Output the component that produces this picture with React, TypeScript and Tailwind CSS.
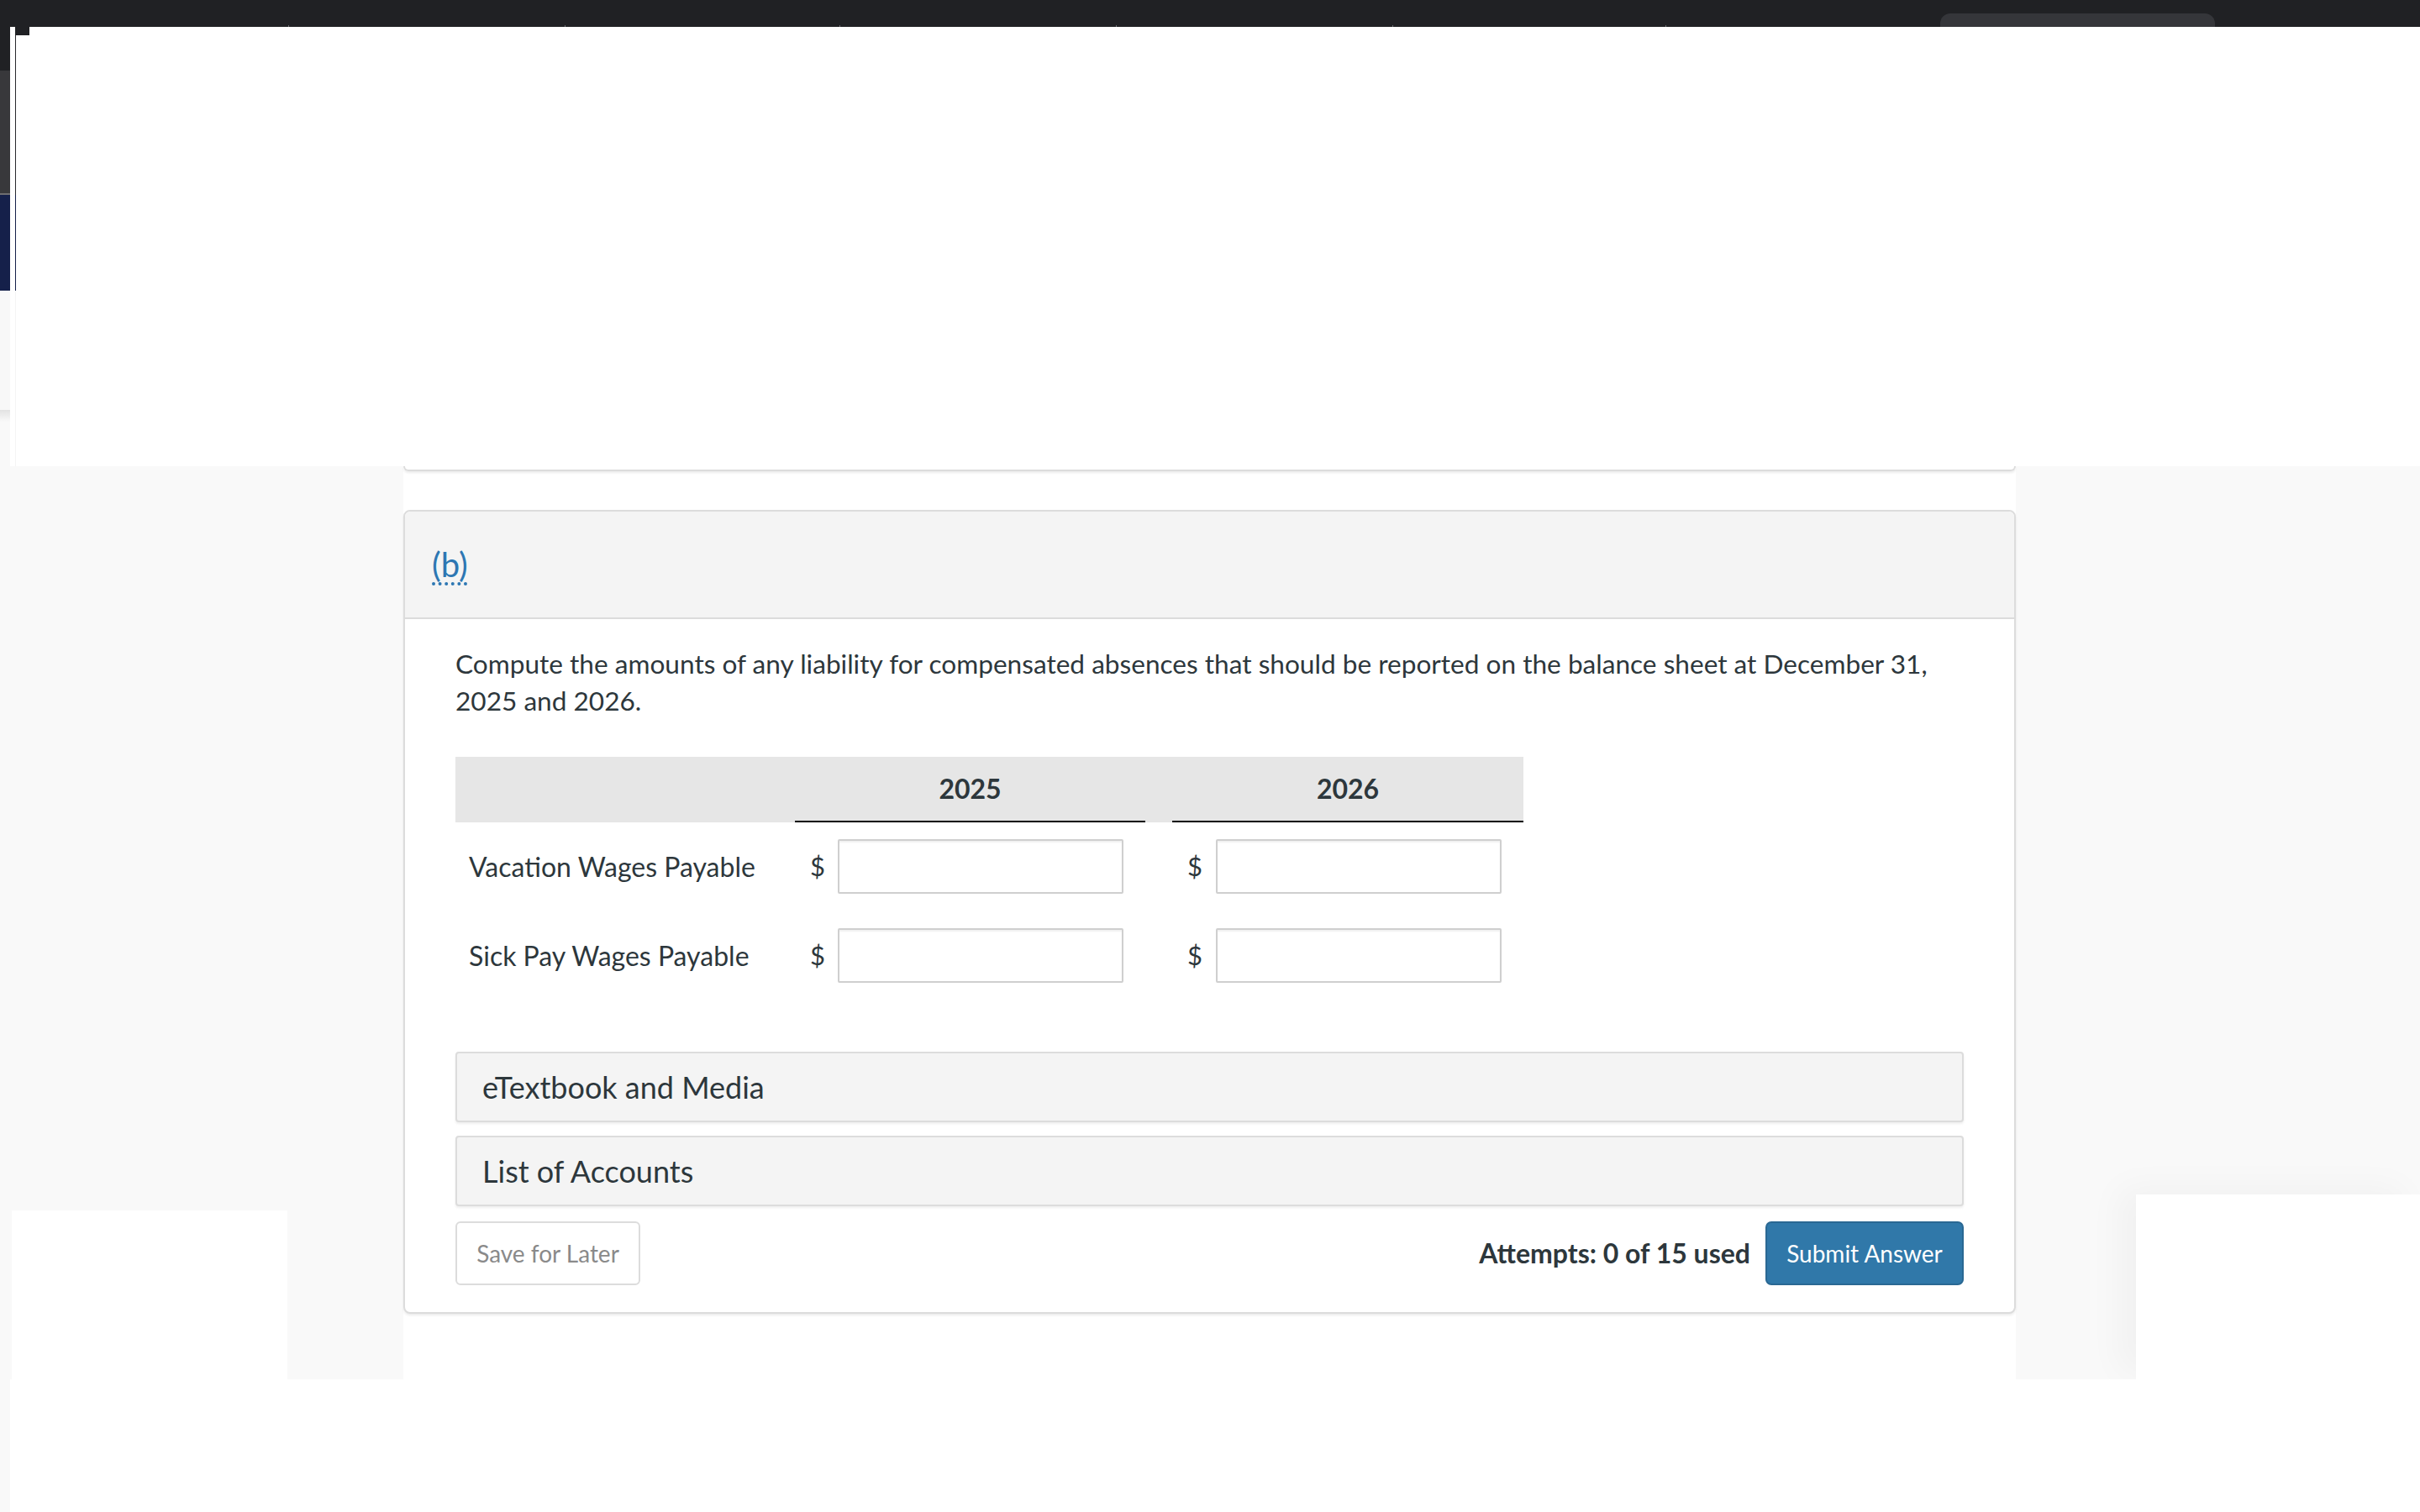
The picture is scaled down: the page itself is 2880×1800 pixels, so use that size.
import React from "react";

const FONT = { fontFamily: "Lato, 'Noto Sans', 'Liberation Sans', sans-serif" };

const TICKS = [343, 328, 326, 328, 328, 324];

function TopBar() {
  return (
    <div className="flex h-[32px] shrink-0 items-end bg-[#202124]">
      {TICKS.map((w, i) => (
        <React.Fragment key={i}>
          <div style={{ width: w }} className="shrink-0" />
          <div className="h-[2px] w-[1px] shrink-0 bg-[#6a6c70]" />
        </React.Fragment>
      ))}
      <div className="w-[326px] shrink-0" />
      <div className="h-[16px] w-[327px] shrink-0 rounded-t-[12px] bg-[#35363a]" />
    </div>
  );
}

function LeftStrip() {
  return (
    <div className="flex w-[12px] shrink-0 flex-col">
      <div className="h-[52px] bg-[#202124]" />
      <div className="h-[146px] bg-[#38383b]" />
      <div className="h-[2px] bg-[#6e6e70]" />
      <div className="h-[114px] bg-[#15204a]" />
      <div className="h-[142px] bg-[#f8f8f8]" />
      <div className="h-[14px] bg-gradient-to-b from-[#e2e2e2] to-[#f9f9f9]" />
      <div className="flex-1 bg-[#f9f9f9]" />
    </div>
  );
}

function TopArea() {
  return (
    <div className="flex h-[523px] shrink-0">
      <LeftStrip />
      <div className="flex flex-1 bg-white">
        <div className="w-[6px] shrink-0" />
        <div className="flex w-[17px] shrink-0 flex-col">
          <div className="h-[10px] bg-[#202124]" />
          <div className="flex w-[1px] flex-1 flex-col">
            <div className="h-[190px] bg-[#2a2a2d]" />
            <div className="h-[114px] bg-[#15204a]" />
            <div className="flex-1 bg-[#f4f4f4]" />
          </div>
        </div>
      </div>
    </div>
  );
}

function MoneyCell({ width }: { width: number }) {
  return (
    <div style={{ width }} className="flex shrink-0 items-center justify-between pl-[18px] pr-[26px]">
      <span className="text-[31px] text-[#2d373c]">$</span>
      <input
        type="text"
        className="h-[65px] w-[340px] rounded-[2px] border-2 border-[#cfcfcf] bg-white shadow-[inset_0_2px_2px_rgba(0,0,0,0.06)] outline-none"
      />
    </div>
  );
}

function Row({ label }: { label: string }) {
  return (
    <div className="flex items-center pb-[21px] pt-[20px]">
      <div className="w-[404px] shrink-0 pl-[16px] text-[32px] text-[#2d373c]">{label}</div>
      <MoneyCell width={417} />
      <div className="w-[32px] shrink-0" />
      <MoneyCell width={418} />
    </div>
  );
}

function Accordion({ title }: { title: string }) {
  return (
    <div className="flex h-[84px] items-center rounded-[4px] border-2 border-[#dcdcdc] bg-[#f4f4f4] pl-[30px] text-[36px] text-[#2d373c] shadow-[0_2px_3px_rgba(0,0,0,0.07)]">
      {title}
    </div>
  );
}

function QuestionCard() {
  return (
    <div className="mt-[46px] rounded-[8px] border-2 border-[#dcdcdc] bg-white shadow-[0_2px_3px_rgba(0,0,0,0.08)]">
      <div className="flex h-[128px] items-center rounded-t-[6px] border-b-2 border-[#dcdcdc] bg-[#f4f4f4] pl-[32px]">
        <a className="text-[40px] text-[#2d77b3] underline decoration-dotted underline-offset-[6px]">(b)</a>
      </div>
      <div className="px-[60px] pb-[32px] pt-[31px]">
        <p className="text-[31.6px] leading-[44px] text-[#2d373c]">
          Compute the amounts of any liability for compensated absences that should be reported on the balance sheet at December 31,
          2025 and 2026.
        </p>

        <div className="mt-[45px] w-[1271px]">
          <div className="flex h-[78px] bg-[#e6e6e6] text-[32px] font-bold text-[#2d373c]">
            <div className="w-[404px] shrink-0" />
            <div className="flex w-[417px] shrink-0 items-center justify-center border-b-2 border-black">2025</div>
            <div className="w-[32px] shrink-0" />
            <div className="flex w-[418px] shrink-0 items-center justify-center border-b-2 border-black">2026</div>
          </div>
          <Row label="Vacation Wages Payable" />
          <Row label="Sick Pay Wages Payable" />
        </div>

        <div className="mt-[61px] flex flex-col gap-[16px]">
          <Accordion title="eTextbook and Media" />
          <Accordion title="List of Accounts" />
        </div>

        <div className="mt-[18px] flex items-center justify-between">
          <button className="h-[76px] w-[220px] rounded-[6px] border-2 border-[#dcdcdc] bg-white text-[28px] text-[#8a8a8a]">
            Save for Later
          </button>
          <div className="flex items-center gap-[18px]">
            <span className="text-[32px] font-bold text-[#2d373c]">Attempts: 0 of 15 used</span>
            <button className="h-[76px] w-[236px] rounded-[7px] border-2 border-[#2a6893] bg-[#3078a9] text-[28px] text-white">
              Submit Answer
            </button>
          </div>
        </div>
      </div>
    </div>
  );
}

function MiddleArea() {
  return (
    <div className="flex h-[1087px] shrink-0">
      <div className="flex w-[480px] shrink-0 flex-col">
        <div className="h-[886px] shrink-0" />
        <div className="ml-[14px] w-[328px] flex-1 bg-white" />
      </div>
      <div className="flex w-[1919px] shrink-0 flex-col bg-white">
        <div className="h-[6px] rounded-b-[8px] border-x-2 border-b-2 border-[#dcdcdc] shadow-[0_2px_3px_rgba(0,0,0,0.08)]" />
        <QuestionCard />
      </div>
      <div className="flex flex-1 flex-col">
        <div className="h-[867px] shrink-0" />
        <div className="ml-[143px] flex-1 bg-white shadow-[-20px_-8px_40px_rgba(0,0,0,0.035)]" />
      </div>
    </div>
  );
}

export default function App() {
  return (
    <div style={FONT} className="flex h-[1800px] w-[2880px] flex-col overflow-hidden bg-[#f9f9f9]">
      <TopBar />
      <TopArea />
      <MiddleArea />
      <div className="flex flex-1">
        <div className="w-[12px] shrink-0 bg-[#f9f9f9]" />
        <div className="flex-1 bg-white" />
      </div>
    </div>
  );
}
